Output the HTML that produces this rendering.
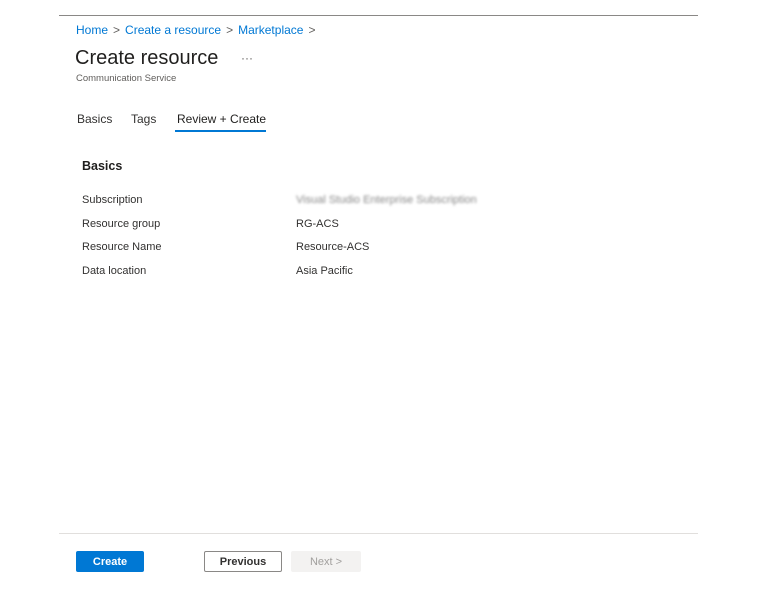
<!DOCTYPE html>
<html><head><style>
body{margin:0;width:768px;height:599px;background:#fff;font-family:"Liberation Sans",sans-serif;position:relative;overflow:hidden;color:#323130}
.a{position:absolute;white-space:nowrap}
.bc{color:#0078d4;font-size:12px}
.sep{color:#605e5c;margin:0 5px}
.lbl{font-size:11px;color:#323130}
.btn{position:absolute;top:551px;height:21px;box-sizing:border-box;font-size:11px;font-weight:bold;text-align:center;line-height:22px;border-radius:2px}
</style></head><body>
<div class="a" style="left:59px;top:15px;width:639px;height:1px;background:#8a8886"></div>
<div class="a bc" style="left:76px;top:23px">Home<span class="sep">&gt;</span>Create a resource<span class="sep">&gt;</span>Marketplace<span class="sep">&gt;</span></div>
<div class="a" style="left:75px;top:47px;font-size:20px;color:#201f1e">Create resource</div>
<div class="a" style="left:241px;top:51px;font-size:12px;color:#605e5c">···</div>
<div class="a" style="left:76px;top:73px;font-size:9.5px;color:#605e5c">Communication Service</div>
<div class="a" style="left:77px;top:112px;font-size:12px;color:#323130">Basics</div>
<div class="a" style="left:131px;top:112px;font-size:12px;color:#323130">Tags</div>
<div class="a" style="left:177px;top:112px;font-size:12px;color:#201f1e">Review + Create</div>
<div class="a" style="left:175px;top:130px;width:91px;height:2px;background:#0078d4"></div>
<div class="a" style="left:82px;top:159px;font-size:12.5px;font-weight:bold;color:#201f1e">Basics</div>
<div class="a lbl" style="left:82px;top:194px">Subscription</div>
<div class="a lbl" style="left:296px;top:194px;color:#888;filter:blur(1.4px)">Visual Studio Enterprise Subscription</div>
<div class="a lbl" style="left:82px;top:218px">Resource group</div>
<div class="a lbl" style="left:296px;top:218px">RG-ACS</div>
<div class="a lbl" style="left:82px;top:241px">Resource Name</div>
<div class="a lbl" style="left:296px;top:241px">Resource-ACS</div>
<div class="a lbl" style="left:82px;top:265px">Data location</div>
<div class="a lbl" style="left:296px;top:265px">Asia Pacific</div>
<div class="a" style="left:59px;top:533px;width:639px;height:1px;background:#e1dfdd"></div>
<div class="btn" style="left:76px;width:68px;background:#0078d4;color:#fff">Create</div>
<div class="btn" style="left:204px;width:78px;border:1px solid #8a8886;color:#323130;line-height:20px">Previous</div>
<div class="btn" style="left:291px;width:70px;background:#f3f2f1;color:#a19f9d;font-weight:normal">Next &gt;</div>
</body></html>
